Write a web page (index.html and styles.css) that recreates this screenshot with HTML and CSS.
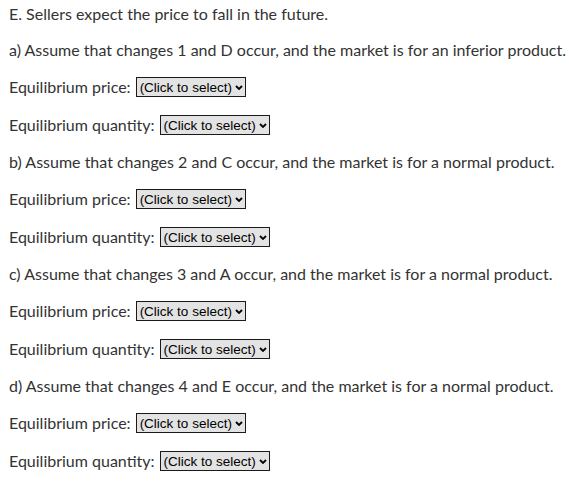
FILE: index.html
```html
<!DOCTYPE html>
<html>
<head>
<meta charset="utf-8">
<link rel="stylesheet" href="styles.css">
</head>
<body>
<div class="q">
  <p class="line">E. Sellers expect the price to fall in the future.</p>

  <p class="line">a) Assume that changes 1 and D occur, and the market is for an inferior product.</p>
  <p class="row">Equilibrium price: <span class="dd"><select><option>(Click to select)</option></select><svg class="chev" viewBox="0 0 8 5" width="8" height="5"><path d="M1 1 L4 4 L7 1" fill="none" stroke="#000" stroke-width="1.8"/></svg></span></p>
  <p class="row">Equilibrium quantity: <span class="dd"><select><option>(Click to select)</option></select><svg class="chev" viewBox="0 0 8 5" width="8" height="5"><path d="M1 1 L4 4 L7 1" fill="none" stroke="#000" stroke-width="1.8"/></svg></span></p>

  <p class="line">b) Assume that changes 2 and C occur, and the market is for a normal product.</p>
  <p class="row">Equilibrium price: <span class="dd"><select><option>(Click to select)</option></select><svg class="chev" viewBox="0 0 8 5" width="8" height="5"><path d="M1 1 L4 4 L7 1" fill="none" stroke="#000" stroke-width="1.8"/></svg></span></p>
  <p class="row">Equilibrium quantity: <span class="dd"><select><option>(Click to select)</option></select><svg class="chev" viewBox="0 0 8 5" width="8" height="5"><path d="M1 1 L4 4 L7 1" fill="none" stroke="#000" stroke-width="1.8"/></svg></span></p>

  <p class="line">c) Assume that changes 3 and A occur, and the market is for a normal product.</p>
  <p class="row">Equilibrium price: <span class="dd"><select><option>(Click to select)</option></select><svg class="chev" viewBox="0 0 8 5" width="8" height="5"><path d="M1 1 L4 4 L7 1" fill="none" stroke="#000" stroke-width="1.8"/></svg></span></p>
  <p class="row">Equilibrium quantity: <span class="dd"><select><option>(Click to select)</option></select><svg class="chev" viewBox="0 0 8 5" width="8" height="5"><path d="M1 1 L4 4 L7 1" fill="none" stroke="#000" stroke-width="1.8"/></svg></span></p>

  <p class="line">d) Assume that changes 4 and E occur, and the market is for a normal product.</p>
  <p class="row">Equilibrium price: <span class="dd"><select><option>(Click to select)</option></select><svg class="chev" viewBox="0 0 8 5" width="8" height="5"><path d="M1 1 L4 4 L7 1" fill="none" stroke="#000" stroke-width="1.8"/></svg></span></p>
  <p class="row">Equilibrium quantity: <span class="dd"><select><option>(Click to select)</option></select><svg class="chev" viewBox="0 0 8 5" width="8" height="5"><path d="M1 1 L4 4 L7 1" fill="none" stroke="#000" stroke-width="1.8"/></svg></span></p>
</div>
</body>
</html>
```

FILE: styles.css
```css
html, body {
  margin: 0;
  padding: 0;
  background: #ffffff;
}
body {
  padding: 4px 9px;
  font-family: "Lato", "Open Sans", sans-serif;
  font-size: 16px;
  color: #333333;
}
.q {
  display: flex;
  flex-direction: column;
  gap: 16px;
}
.line, .row {
  margin: 0;
  line-height: 20px;
  white-space: nowrap;
}
.row {
  display: flex;
  align-items: center;
  height: 22px;
  gap: 5px;
}
.dd {
  position: relative;
  display: inline-block;
  width: 110px;
  height: 20px;
}
.dd select {
  -webkit-appearance: none;
  appearance: none;
  box-sizing: border-box;
  width: 110px;
  height: 20px;
  font-family: "Liberation Sans", Arial, sans-serif;
  font-size: 13.5px;
  color: #000;
  background: #e3e3e3;
  border: 1px solid #1a1a1a;
  border-radius: 0;
  padding: 0 0 0 3px;
  margin: 0;
  display: block;
}
.chev {
  position: absolute;
  right: 3px;
  top: 8px;
  pointer-events: none;
}
```
